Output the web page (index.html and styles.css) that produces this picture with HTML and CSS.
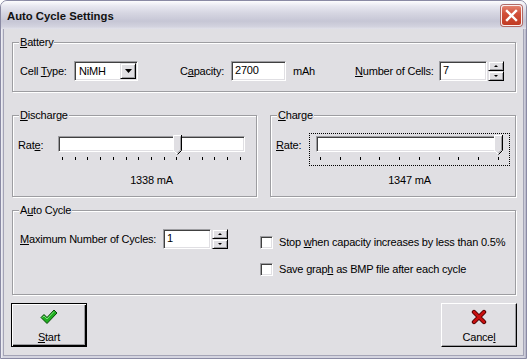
FILE: index.html
```html
<!DOCTYPE html>
<html>
<head>
<meta charset="utf-8">
<title>Auto Cycle Settings</title>
<link rel="stylesheet" href="styles.css">
</head>
<body>
<div class="window">
  <div class="titlebar">
    <span class="title">Auto Cycle Settings</span>
    <div class="close">
      <svg width="19" height="19" viewBox="0 0 19 19"><path d="M5 5 L14 14 M14 5 L5 14" stroke="#fff" stroke-width="2.4" stroke-linecap="square"/></svg>
    </div>
  </div>
  <div class="client">
    <div class="group battery">
      <span class="legend"><u>B</u>attery</span>
      <div class="row">
        <span class="lbl w-celltype">Cell <u>T</u>ype:</span>
        <div class="combo">
          <span class="combo-text">NiMH</span>
          <span class="combo-btn"><svg width="7" height="4" viewBox="0 0 7 4"><polygon points="0,0 7,0 3.5,4" fill="#000"/></svg></span>
        </div>
        <span class="lbl w-capacity">C<u>a</u>pacity:</span>
        <div class="edit w-cap">2700</div>
        <span class="lbl w-unit">mAh</span>
        <span class="lbl w-cells"><u>N</u>umber of Cells:</span>
        <div class="edit w-cellsedit">7</div>
        <div class="spin">
          <span class="spin-btn"><span class="arrow-up"></span></span>
          <span class="spin-btn"><span class="arrow-down"></span></span>
        </div>
      </div>
    </div>

    <div class="rates">
      <div class="group rate-group discharge">
        <span class="legend"><u>D</u>ischarge</span>
        <div class="rate-row">
          <span class="lbl rate-lbl">Rat<u>e</u>:</span>
          <div class="rate-col">
            <div class="slider">
              <div class="slider-area">
                <div class="track"></div>
                <div class="ticks t15">
                  <i></i><i></i><i></i><i></i><i></i><i></i><i></i><i></i><i></i><i></i><i></i><i></i><i></i><i></i><i></i>
                </div>
                <svg class="thumb" style="left:115px" width="9" height="20" viewBox="0 0 9 20">
                  <polygon points="0.5,0.5 8.5,0.5 8.5,15.5 4.5,19.5 0.5,15.5" fill="#e0dfe3"/>
                  <polyline points="4.5,19.5 0.5,15.5 0.5,0.5 8,0.5" stroke="#fff" fill="none"/>
                  <polyline points="8.5,0 8.5,15.5 4.5,19.5" stroke="#000" fill="none"/>
                  <polyline points="7.5,1.5 7.5,15 4.5,18" stroke="#9d9da1" fill="none"/>
                </svg>
              </div>
            </div>
            <div class="value">1338 mA</div>
          </div>
        </div>
      </div>
      <div class="group rate-group charge">
        <span class="legend"><u>C</u>harge</span>
        <div class="rate-row">
          <span class="lbl rate-lbl"><u>R</u>ate:</span>
          <div class="rate-col">
            <div class="slider focused">
              <div class="slider-area">
                <div class="track"></div>
                <div class="ticks t10">
                  <i></i><i></i><i></i><i></i><i></i><i></i><i></i><i></i><i></i><i></i>
                </div>
                <svg class="thumb" style="left:178px" width="9" height="20" viewBox="0 0 9 20">
                  <polygon points="0.5,0.5 8.5,0.5 8.5,15.5 4.5,19.5 0.5,15.5" fill="#e0dfe3"/>
                  <polyline points="4.5,19.5 0.5,15.5 0.5,0.5 8,0.5" stroke="#fff" fill="none"/>
                  <polyline points="8.5,0 8.5,15.5 4.5,19.5" stroke="#000" fill="none"/>
                  <polyline points="7.5,1.5 7.5,15 4.5,18" stroke="#9d9da1" fill="none"/>
                </svg>
              </div>
            </div>
            <div class="value">1347 mA</div>
          </div>
        </div>
      </div>
    </div>

    <div class="group auto">
      <span class="legend">A<u>u</u>to Cycle</span>
      <div class="auto-row">
        <div class="cycles">
          <span class="lbl w-max"><u>M</u>aximum Number of Cycles:</span>
          <div class="edit w-maxedit">1</div>
          <div class="spin">
            <span class="spin-btn"><span class="arrow-up"></span></span>
            <span class="spin-btn"><span class="arrow-down"></span></span>
          </div>
        </div>
        <div class="checks">
          <div class="check-row"><span class="checkbox"></span><span class="lbl">Stop <u>w</u>hen capacity increases by less than 0.5%</span></div>
          <div class="check-row"><span class="checkbox"></span><span class="lbl">Save grap<u>h</u> as BMP file after each cycle</span></div>
        </div>
      </div>
    </div>

    <div class="buttons">
      <div class="btn default">
        <svg class="btn-icon" width="18" height="16" viewBox="0 0 18 16">
          <polygon points="1,8.5 4,5.5 7,8.5 14,1 17,4 7,14.5" fill="#1fae1f" stroke="#0a4a0a" stroke-width="1" stroke-linejoin="round"/>
          <polyline points="2.5,8.5 4,7 7,10 14,2.5" stroke="#7be07b" stroke-width="1" fill="none"/>
        </svg>
        <span class="btn-text"><u>S</u>tart</span>
      </div>
      <div class="btn">
        <svg class="btn-icon" width="16" height="16" viewBox="0 0 16 16">
          <path d="M3 3 L13 13 M13 3 L3 13" stroke="#4a0000" stroke-width="4.4" stroke-linecap="round"/>
          <path d="M3 3 L13 13 M13 3 L3 13" stroke="#c81010" stroke-width="2.6" stroke-linecap="round"/>
        </svg>
        <span class="btn-text">Cance<u>l</u></span>
      </div>
    </div>
  </div>
</div>
</body>
</html>
```

FILE: styles.css
```css
* { box-sizing: border-box; }
html, body { margin: 0; padding: 0; }
body {
  width: 527px;
  height: 359px;
  overflow: hidden;
  background: #ffffff;
  font-family: "Liberation Sans", Arial, sans-serif;
  font-size: 11px;
  letter-spacing: -0.2px;
  line-height: 13px;
  color: #000;
}
u { text-decoration: underline; text-underline-offset: 1px; }

.window {
  width: 527px;
  height: 359px;
  display: flex;
  flex-direction: column;
  border: 1px solid #8a8aa4;
  border-radius: 7px 7px 0 0;
  background: linear-gradient(90deg, #f4f4f8 0, #d4d4e0 2px, #d4d4e0 calc(100% - 2px), #b4b4c6 100%);
  overflow: hidden;
}

.titlebar {
  height: 28px;
  flex: none;
  display: flex;
  align-items: center;
  justify-content: space-between;
  padding: 2px 4px 0 6px;
  background: linear-gradient(180deg, #fdfdfe 0%, #e8e8f0 18%, #d5d5e1 45%, #c6c6d5 72%, #d3d3df 92%, #e2e2ea 100%);
}
.title {
  font-weight: bold;
  font-size: 11.3px;
  letter-spacing: 0;
  color: #111;
}
.close {
  width: 21px;
  height: 21px;
  margin-top: -1px;
  border: 1px solid #fbeeee;
  border-radius: 3px;
  background: linear-gradient(180deg, #e2826f 0%, #d24f39 40%, #c13a24 100%);
  box-shadow: 0 0 0 1px #b06a66;
  display: flex;
  align-items: center;
  justify-content: center;
}

.client {
  flex: 1;
  margin: 0 2px 2px 2px;
  border: 1px solid #a4a4b6;
  border-top: none;
  background: #e0dfe3;
  display: flex;
  flex-direction: column;
  padding: 13px 7px 0 8px;
}

.group {
  position: relative;
  border: 1px solid #9d9da1;
  box-shadow: inset 1px 1px 0 #fff, 1px 1px 0 #fff;
}
.legend {
  position: absolute;
  top: -7px;
  left: 6px;
  padding: 0 1px;
  background: #e0dfe3;
  white-space: nowrap;
}
.lbl { white-space: nowrap; }

/* Battery */
.battery { height: 50px; padding: 18px 0 0 7px; }
.row { display: flex; align-items: center; height: 20px; }
.w-celltype { width: 54px; }
.w-capacity { width: 51px; margin-left: 42px; }
.w-unit { width: 62px; margin-left: 7px; }
.w-cells { width: 84px; }

.combo {
  width: 64px;
  height: 20px;
  display: flex;
  align-items: center;
  justify-content: space-between;
  background: #fff;
  border: 1px solid;
  border-color: #9d9da1 #fff #fff #9d9da1;
  box-shadow: inset 1px 1px 0 #404040, inset -1px -1px 0 #e0dfe3;
  padding: 1px 1px 1px 4px;
}
.combo-btn {
  width: 16px;
  height: 16px;
  display: flex;
  align-items: center;
  justify-content: center;
  background: #e0dfe3;
  border: 1px solid;
  border-color: #e0dfe3 #000 #000 #e0dfe3;
  box-shadow: inset 1px 1px 0 #fff, inset -1px -1px 0 #9d9da1;
}

.edit {
  height: 20px;
  background: #fff;
  border: 1px solid;
  border-color: #9d9da1 #fff #fff #9d9da1;
  box-shadow: inset 1px 1px 0 #404040, inset -1px -1px 0 #e0dfe3;
  padding: 2px 3px 0 3px;
  line-height: 13px;
}
.w-cap { width: 55px; }
.w-cellsedit { width: 48px; }
.w-maxedit { width: 48px; }

.spin {
  width: 16px;
  height: 20px;
  margin-left: 1px;
  display: flex;
  flex-direction: column;
}
.spin-btn {
  height: 10px;
  display: flex;
  align-items: center;
  justify-content: center;
  background: #e0dfe3;
  border: 1px solid;
  border-color: #e0dfe3 #000 #000 #e0dfe3;
  box-shadow: inset 1px 1px 0 #fff, inset -1px -1px 0 #9d9da1;
}
.arrow-up {
  width: 0; height: 0;
  border-left: 2px solid transparent;
  border-right: 2px solid transparent;
  border-bottom: 2px solid #000;
}
.arrow-down {
  width: 0; height: 0;
  border-left: 2px solid transparent;
  border-right: 2px solid transparent;
  border-top: 2px solid #000;
}

/* Rates */
.rates {
  display: flex;
  justify-content: space-between;
  margin-top: 23px;
}
.rate-group { height: 82px; padding: 17px 0 0 5px; }
.discharge { width: 245px; }
.charge { width: 246px; }
.rate-row { display: flex; align-items: flex-start; }
.rate-lbl { width: 33px; margin-top: 6px; }
.rate-col { display: flex; flex-direction: column; align-items: center; width: 201px; }
.slider {
  width: 201px;
  height: 33px;
  border: 1px dotted transparent;
  padding: 2px 6px 0 6px;
}
.slider.focused { border-color: #000; }
.slider-area { position: relative; width: 187px; }
.track {
  height: 16px;
  background: #fff;
  border: 1px solid;
  border-color: #9d9da1 #fff #fff #9d9da1;
  box-shadow: inset 1px 1px 0 #404040, inset -1px -1px 0 #e0dfe3;
}
.ticks {
  display: flex;
  justify-content: space-between;
  height: 3px;
  margin-top: 5px;
  padding: 0 4px;
}
.ticks i { display: block; width: 1px; height: 3px; background: #000; }
.thumb { position: absolute; top: -1px; }
.value { margin-top: 8px; text-align: center; }

/* Auto cycle */
.auto { height: 85px; margin-top: 13px; padding: 0 0 0 7px; }
.auto-row { display: flex; }
.cycles { display: flex; align-items: center; height: 20px; margin-top: 18px; }
.w-max { width: 143px; }
.checks {
  display: flex;
  flex-direction: column;
  gap: 14px;
  margin-left: 32px;
  padding-top: 25px;
}
.check-row { display: flex; align-items: center; height: 13px; }
.checkbox {
  width: 13px;
  height: 13px;
  margin-right: 6px;
  background: #fff;
  border: 1px solid;
  border-color: #9d9da1 #fff #fff #9d9da1;
  box-shadow: inset 1px 1px 0 #404040, inset -1px -1px 0 #e0dfe3;
}

/* Buttons */
.buttons {
  display: flex;
  justify-content: space-between;
  margin: 8px -1px 0 -1px;
}
.btn {
  width: 76px;
  height: 44px;
  display: flex;
  flex-direction: column;
  align-items: center;
  background: #e0dfe3;
  border: 1px solid;
  border-color: #fff #000 #000 #fff;
  box-shadow: inset -1px -1px 0 #9d9da1;
  padding-top: 5px;
}
.btn.default {
  border-color: #000;
  box-shadow: inset 1px 1px 0 #fff, inset -1px -1px 0 #000, inset -2px -2px 0 #9d9da1;
}
.btn-icon { display: block; }
.btn-text { margin-top: 6px; }
```
